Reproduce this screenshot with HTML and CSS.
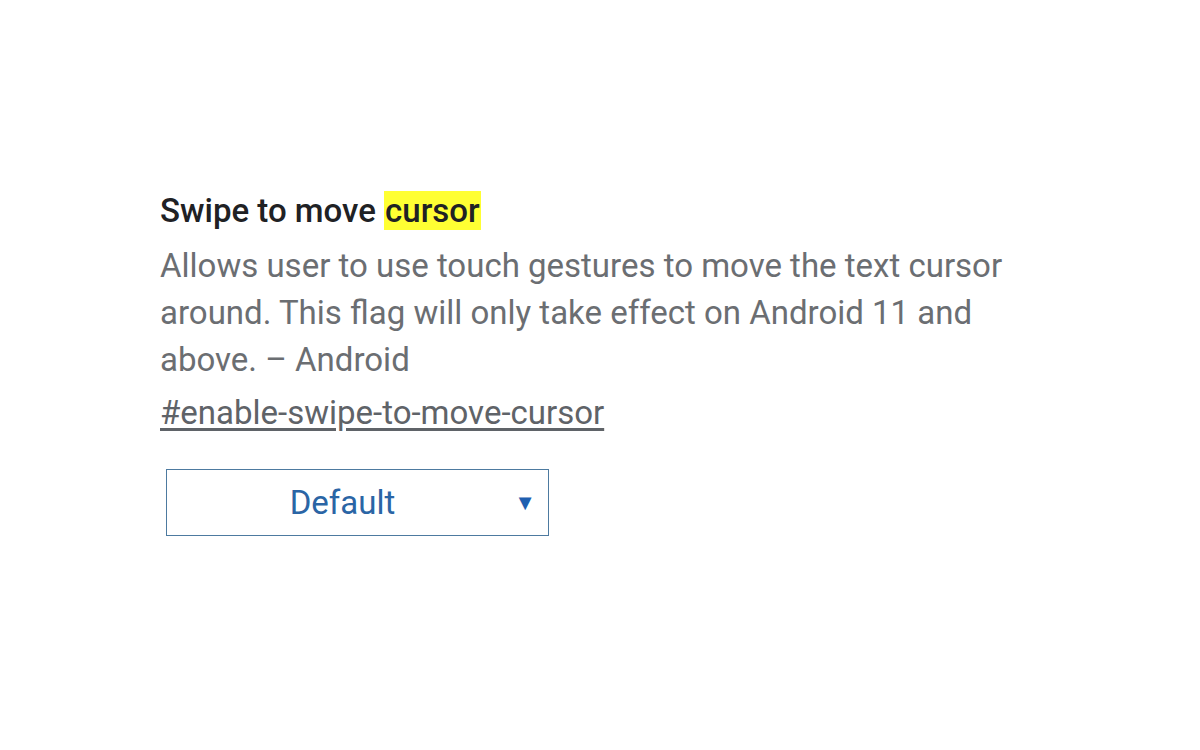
FILE: index.html
```html
<!DOCTYPE html>
<html lang="en">
<head>
    <meta charset="UTF-8">
    <meta name="viewport" content="width=device-width, initial-scale=1.0">
    <title>Flags</title>
    <link rel="stylesheet" href="styles.css">
</head>
<body>
    <div class="experiment">
        <h3 class="experiment-name">Swipe to move <mark class="match">cursor</mark></h3>
        <p class="description">Allows user to use touch gestures to move the text cursor around. This flag will only take effect on Android 11 and above. – Android</p>
        <a class="permalink" href="#enable-swipe-to-move-cursor">#enable-swipe-to-move-cursor</a>
        <div class="select">
            <span class="select-value">Default</span>
            <span class="select-arrow">▼</span>
        </div>
    </div>
</body>
</html>
```

FILE: styles.css
```css
body {
    margin: 0;
    background-color: #fff;
    font-family: Roboto, "Liberation Sans", sans-serif;
}

.experiment {
    padding: 188px 0 0 160px;
    width: 860px;
}

.experiment-name {
    margin: 0;
    font-size: 33px;
    font-weight: 500;
    color: #202124;
    line-height: 46px;
}

.match {
    background-color: #ffff33;
    color: #202124;
    padding: 0 1px;
}

.description {
    margin: 8px 0 0;
    font-size: 33px;
    line-height: 47px;
    color: #6b6e72;
}

.permalink {
    display: inline-block;
    margin-top: 8px;
    font-size: 33px;
    line-height: 44px;
    color: #5f6368;
    text-decoration: underline;
    text-underline-offset: 4px;
}

.select {
    margin: 34px 0 0 6px;
    width: 383px;
    height: 67px;
    padding-right: 30px;
    border: 1.5px solid #4d7aa0;
    display: flex;
    align-items: center;
    position: relative;
    box-sizing: border-box;
}

.select-value {
    flex: 1;
    text-align: center;
    font-size: 33px;
    color: #2a65a5;
}

.select-arrow {
    position: absolute;
    right: 12px;
    font-size: 22px;
    color: #1f5fb0;
}
```
